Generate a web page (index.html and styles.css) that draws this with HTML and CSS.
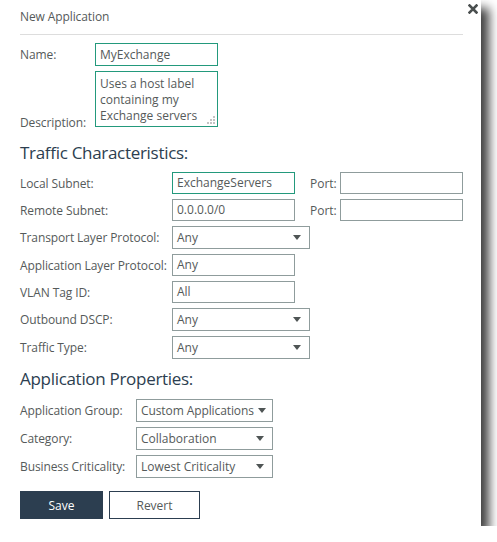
FILE: index.html
```html
<!DOCTYPE html>
<html>
<head>
<meta charset="utf-8">
<link rel="stylesheet" href="styles.css">
</head>
<body>
<div class="panel">
  <span class="close" aria-label="Close">
    <svg width="10" height="10" viewBox="0 0 10 10"><path d="M1.5 1.5 L8.5 8.5 M8.5 1.5 L1.5 8.5" stroke="#4a4f4f" stroke-width="2.6" stroke-linecap="square"/></svg>
  </span>
  <div class="header">New Application</div>

  <div class="name-block">
    <div class="row">
      <span class="label w75">Name:</span>
      <div class="field tall focus w123">MyExchange</div>
    </div>
    <div class="row desc-row">
      <span class="label w75 desc-label">Description:</span>
      <div class="textarea focus">Uses a host label containing my Exchange servers
        <svg class="grip" width="10" height="10" viewBox="0 0 10 10"><g fill="#c4c4c4"><rect x="7" y="1" width="2" height="2"/><rect x="4" y="4" width="2" height="2"/><rect x="7" y="4" width="2" height="2"/><rect x="1" y="7" width="2" height="2"/><rect x="4" y="7" width="2" height="2"/><rect x="7" y="7" width="2" height="2"/></g></svg>
      </div>
    </div>
  </div>

  <h2 class="heading h-traffic">Traffic Characteristics:</h2>
  <div class="rows">
    <div class="row">
      <span class="label w152">Local Subnet:</span>
      <div class="field focus w123">ExchangeServers</div>
      <span class="port">Port:</span>
      <div class="field w123"></div>
    </div>
    <div class="row">
      <span class="label w152">Remote Subnet:</span>
      <div class="field w123">0.0.0.0/0</div>
      <span class="port">Port:</span>
      <div class="field w123"></div>
    </div>
    <div class="row">
      <span class="label w152">Transport Layer Protocol:</span>
      <div class="select w138"><span>Any</span><i class="tri"></i></div>
    </div>
    <div class="row">
      <span class="label w152">Application Layer Protocol:</span>
      <div class="field w123">Any</div>
    </div>
    <div class="row">
      <span class="label w152">VLAN Tag ID:</span>
      <div class="field w123">All</div>
    </div>
    <div class="row">
      <span class="label w152">Outbound DSCP:</span>
      <div class="select w138"><span>Any</span><i class="tri"></i></div>
    </div>
    <div class="row">
      <span class="label w152">Traffic Type:</span>
      <div class="select w138"><span>Any</span><i class="tri"></i></div>
    </div>
  </div>

  <h2 class="heading h-app">Application Properties:</h2>
  <div class="rows">
    <div class="row">
      <span class="label w116">Application Group:</span>
      <div class="select w137 tight"><span>Custom Applications</span><i class="tri"></i></div>
    </div>
    <div class="row">
      <span class="label w116">Category:</span>
      <div class="select w137"><span>Collaboration</span><i class="tri"></i></div>
    </div>
    <div class="row">
      <span class="label w116">Business Criticality:</span>
      <div class="select w137"><span>Lowest Criticality</span><i class="tri"></i></div>
    </div>
  </div>

  <div class="buttons">
    <button class="btn save">Save</button>
    <button class="btn revert">Revert</button>
  </div>
</div>
</body>
</html>
```

FILE: styles.css
```css
html, body {
  margin: 0;
  padding: 0;
  background: #ffffff;
}
body {
  font-family: "Open Sans", "Noto Sans", sans-serif;
  font-size: 12px;
  color: #555a5a;
}
.panel {
  position: relative;
  width: 443px;
  height: 526px;
  padding: 0 18px 0 20px;
  background: #ffffff;
  box-shadow: 8px 8px 10px rgba(0, 0, 0, 0.75);
}
.close {
  position: absolute;
  top: 4px;
  right: 3px;
  width: 10px;
  height: 10px;
  display: block;
}
.close svg { display: block; }
.header {
  padding-top: 9px;
  padding-bottom: 9px;
  line-height: 16px;
  border-bottom: 1px solid #dddddd;
  color: #555a5a;
  letter-spacing: -0.1px;
}
.name-block {
  margin-top: 8px;
  display: flex;
  flex-direction: column;
  gap: 5px;
}
.rows {
  display: flex;
  flex-direction: column;
  gap: 5px;
}
.row {
  display: flex;
  align-items: center;
}
.label {
  flex: none;
  letter-spacing: -0.1px;
  white-space: nowrap;
}
.w75 { width: 75px; }
.w152 { width: 152px; }
.w116 { width: 116px; }
.field, .select, .textarea {
  box-sizing: border-box;
  border: 1px solid #8f9c9c;
  background: #ffffff;
  color: #555a5a;
  white-space: nowrap;
}
.field {
  height: 22px;
  line-height: 20px;
  padding: 0 4px;
}
.field.tall {
  height: 23px;
  line-height: 21px;
}
.focus { border-color: #23997c; }
.w123 { width: 123px; }
.w138 { width: 138px; }
.w137 { width: 137px; }
.select {
  height: 23px;
  line-height: 19px;
  padding: 0 8px 0 4px;
  display: flex;
  align-items: center;
  justify-content: space-between;
}
.select.tight { padding-right: 6px; }
.select.tight span { letter-spacing: -0.1px; }
.tri {
  display: block;
  width: 0;
  height: 0;
  border-left: 4px solid transparent;
  border-right: 4px solid transparent;
  border-top: 5px solid #4f5555;
  flex: none;
}
.port {
  margin-left: 15px;
  width: 30px;
}
.desc-row { align-items: flex-end; }
.desc-label { margin-bottom: -4px; }
.textarea {
  position: relative;
  width: 123px;
  height: 56px;
  padding: 4px 4px 0 4px;
  line-height: 16px;
  white-space: normal;
  font-size: 12px;
}
.grip {
  position: absolute;
  right: 1px;
  bottom: 1px;
}
.heading {
  margin: 0;
  font-weight: normal;
  font-size: 17px;
  line-height: 24px;
  color: #2c3e50;
  letter-spacing: -0.3px;
}
.h-traffic { margin-top: 14px; margin-bottom: 7px; }
.h-app { margin-top: 8px; margin-bottom: 8px; }
.buttons {
  margin-top: 13px;
  display: flex;
  gap: 6px;
}
.btn {
  box-sizing: border-box;
  height: 28px;
  font-family: "Open Sans", "Noto Sans", sans-serif;
  font-size: 12px;
  padding: 0;
  cursor: pointer;
}
.save {
  width: 83px;
  background: #2c3e50;
  border: 1px solid #2c3e50;
  color: #ffffff;
}
.revert {
  width: 91px;
  background: #ffffff;
  border: 1px solid #2c3e50;
  color: #555a5a;
}
```
